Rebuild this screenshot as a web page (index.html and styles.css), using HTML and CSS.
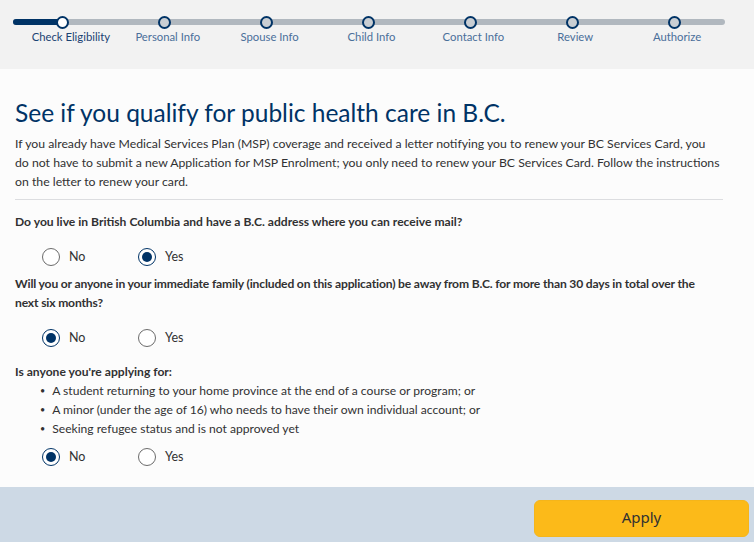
FILE: index.html
```html
<!DOCTYPE html>
<html lang="en">
<head>
<meta charset="utf-8">
<title>Check Eligibility</title>
<link rel="stylesheet" href="styles.css">
</head>
<body>
<header class="progress">
  <div class="steps">
    <div class="track"><div class="track-fill"></div></div>
    <div class="step current"><span class="dot"></span><span class="label">Check Eligibility</span></div>
    <div class="step"><span class="dot"></span><span class="label">Personal Info</span></div>
    <div class="step"><span class="dot"></span><span class="label">Spouse Info</span></div>
    <div class="step"><span class="dot"></span><span class="label">Child Info</span></div>
    <div class="step"><span class="dot"></span><span class="label">Contact Info</span></div>
    <div class="step"><span class="dot"></span><span class="label">Review</span></div>
    <div class="step"><span class="dot"></span><span class="label">Authorize</span></div>
  </div>
</header>
<main class="content">
  <h1 class="title">See if you qualify for public health care in B.C.</h1>
  <p class="intro">If you already have Medical Services Plan (MSP) coverage and received a letter notifying you to renew your BC Services Card, you<br>do not have to submit a new Application for MSP Enrolment; you only need to renew your BC Services Card. Follow the instructions on the letter to renew your card.</p>
  <hr class="divider">
  <section class="question q1">
    <p class="q-text">Do you live in British Columbia and have a B.C. address where you can receive mail?</p>
    <div class="options">
      <label class="option"><span class="radio"></span><span>No</span></label>
      <label class="option"><span class="radio checked"></span><span>Yes</span></label>
    </div>
  </section>
  <section class="question q2">
    <p class="q-text">Will you or anyone in your immediate family (included on this application) be away from B.C. for more than 30 days in total over the<br>next six months?</p>
    <div class="options">
      <label class="option"><span class="radio checked"></span><span>No</span></label>
      <label class="option"><span class="radio"></span><span>Yes</span></label>
    </div>
  </section>
  <section class="question q3">
    <p class="q-text">Is anyone you're applying for:</p>
    <ul class="bullets">
      <li>A student returning to your home province at the end of a course or program; or</li>
      <li>A minor (under the age of 16) who needs to have their own individual account; or</li>
      <li>Seeking refugee status and is not approved yet</li>
    </ul>
    <div class="options">
      <label class="option"><span class="radio checked"></span><span>No</span></label>
      <label class="option"><span class="radio"></span><span>Yes</span></label>
    </div>
  </section>
</main>
<footer class="footer">
  <button class="apply" type="button">Apply</button>
</footer>
</body>
</html>
```
FILE: styles.css
```css
* { box-sizing: border-box; }
html, body { margin: 0; padding: 0; }
body {
  font-family: Lato, "Noto Sans", sans-serif;
  color: #313132;
  background: #fcfcfc;
  width: 754px;
  height: 542px;
  overflow: hidden;
  display: flex;
  flex-direction: column;
}
.progress {
  background: #f2f2f2;
  height: 69px;
  padding: 16px 29px 0 12px;
}
.steps {
  position: relative;
  display: grid;
  grid-template-columns: repeat(7, 1fr);
}
.track {
  position: absolute;
  left: 1px;
  right: 0;
  top: 3px;
  height: 6px;
  border-radius: 3px;
  background: #b1b8bf;
}
.track-fill {
  width: 51px;
  height: 100%;
  border-radius: 3px 0 0 3px;
  background: #003366;
}
.step {
  position: relative;
  display: flex;
  flex-direction: column;
  align-items: center;
}
.dot {
  width: 13px;
  height: 13px;
  border-radius: 50%;
  border: 2.5px solid #003366;
  background: #c9ced3;
}
.step.current .dot { background: #ffffff; }
.label {
  margin-top: 1px;
  margin-left: 6px;
  font-size: 11.3px;
  line-height: 14px;
  color: #4a6f9a;
  white-space: nowrap;
}
.step.current .label { color: #1a4272; margin-left: 16px; }
.content {
  flex: 1;
  padding: 0 31px 0 15px;
}
.title {
  margin: 29px 0 0;
  font-size: 24.5px;
  line-height: 30px;
  font-weight: 400;
  color: #003366;
}
.intro {
  margin: 6px 0 0;
  font-size: 12.25px;
  line-height: 19px;
}
.divider {
  margin: 8px 0 0;
  border: 0;
  border-top: 1px solid #dcdde0;
}
.question { margin-top: 12px; }
.question.q2 { margin-top: 8px; }
.question.q3 { margin-top: 15px; }
.q-text {
  margin: 0;
  font-size: 12.1px;
  line-height: 19px;
  font-weight: 700;
}
.q2 .q-text { letter-spacing: -0.16px; }
.options {
  display: flex;
  margin: 16px 0 0 27px;
}
.option {
  width: 96px;
  display: flex;
  align-items: center;
  gap: 9px;
  font-size: 12.5px;
  line-height: 19px;
}
.radio {
  width: 18px;
  height: 18px;
  border-radius: 50%;
  border: 1px solid #6b6b6b;
  background: #fff;
  display: flex;
  align-items: center;
  justify-content: center;
}
.radio.checked { border: 1.5px solid #003366; }
.radio.checked::after {
  content: "";
  width: 10px;
  height: 10px;
  border-radius: 50%;
  background: #003366;
}
.bullets {
  margin: 0;
  padding: 0 0 0 25px;
  list-style: none;
  font-size: 12.1px;
  line-height: 19px;
}
.bullets li { display: flex; align-items: center; gap: 7px; height: 19px; }
.bullets li::before { content: "•"; font-size: 9px; line-height: 19px; }
.bullets + .options { margin-top: 9px; }
.footer {
  background: #cdd9e5;
  height: 55px;
  padding: 13px 5px 0 0;
  display: flex;
  justify-content: flex-end;
  align-items: flex-start;
}
.apply {
  width: 215px;
  height: 37px;
  padding: 0 0 4px;
  border: 1px solid #f5b51a;
  border-radius: 6px;
  background: #fcba19;
  color: #313132;
  font-family: "Noto Sans", sans-serif;
  font-size: 15px;
  line-height: 20px;
  cursor: pointer;
}
```
